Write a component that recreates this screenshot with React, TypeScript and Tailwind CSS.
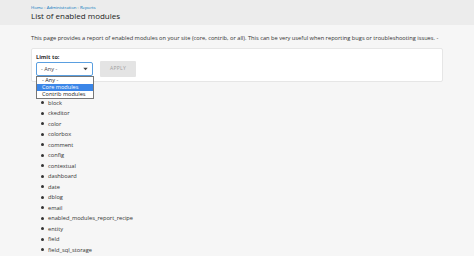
import React from "react";

const modules = [
  "block",
  "ckeditor",
  "color",
  "colorbox",
  "comment",
  "config",
  "contextual",
  "dashboard",
  "date",
  "dblog",
  "email",
  "enabled_modules_report_recipe",
  "entity",
  "field",
  "field_sql_storage",
];

export default function App() {
  return (
    <div className="w-[474px] h-[256px] overflow-hidden bg-[#f6f6f6] text-[#333] font-['Open_Sans',sans-serif]">
      <div className="h-[25px] bg-[#ececec] px-[31px] pt-[5px]">
        <div className="text-[4.3px] leading-[5px] text-[#0074bd]">
          Home <span className="text-[#888]">›</span> Administration{" "}
          <span className="text-[#888]">›</span> Reports
        </div>
        <h1 className="text-[8px] leading-[11px] text-[#222] font-normal">
          List of enabled modules
        </h1>
      </div>
      <div className="px-[31px] pt-[9px]">
        <p className="text-[5.7px] leading-[8px] whitespace-nowrap">
          This page provides a report of enabled modules on your site (core, contrib, or all). This can be very useful when reporting bugs or troubleshooting issues. -
        </p>
        <div className="mt-[6px] h-[34px] bg-white border border-[#e6e6e6] rounded-[2px] px-[4px] pt-[5px]">
          <div className="text-[5.6px] leading-[6px] font-bold text-[#333]">Limit to:</div>
          <div className="mt-[1px] flex items-center gap-[7px]">
            <div className="relative">
              <div className="w-[57px] h-[14px] border border-[#5a9fe0] rounded-[2px] bg-white flex items-center justify-between pl-[4px] pr-[4px]">
                <span className="text-[5.6px] text-[#444]">- Any -</span>
                <svg width="5" height="4" viewBox="0 0 5 4">
                  <path d="M0.3 0.8 L2.5 3.2 L4.7 0.8 Z" fill="#444" />
                </svg>
              </div>
              <div className="absolute left-0 top-[14px] w-[58px] bg-white border border-[#777] z-10 text-[5.6px] leading-[7px]">
                <div className="pl-[5px] text-[#222]">- Any -</div>
                <div className="pl-[5px] bg-[#3b86e8] text-white">Core modules</div>
                <div className="pl-[5px] text-[#222]">Contrib modules</div>
              </div>
            </div>
            <button className="w-[36px] h-[16px] bg-[#e4e4e4] rounded-[1px] text-[5px] tracking-[0.3px] text-[#a0a0a0]">
              APPLY
            </button>
          </div>
        </div>
        <ul className="mt-[15.7px] pl-[10px] text-[5.7px] leading-[10.5px] text-[#333]">
          {modules.map((m) => (
            <li key={m} className="flex items-center">
              <span className="block shrink-0 w-[3px] h-[3px] rounded-full bg-[#333] mr-[4px]" />
              <span>{m}</span>
            </li>
          ))}
        </ul>
      </div>
    </div>
  );
}
